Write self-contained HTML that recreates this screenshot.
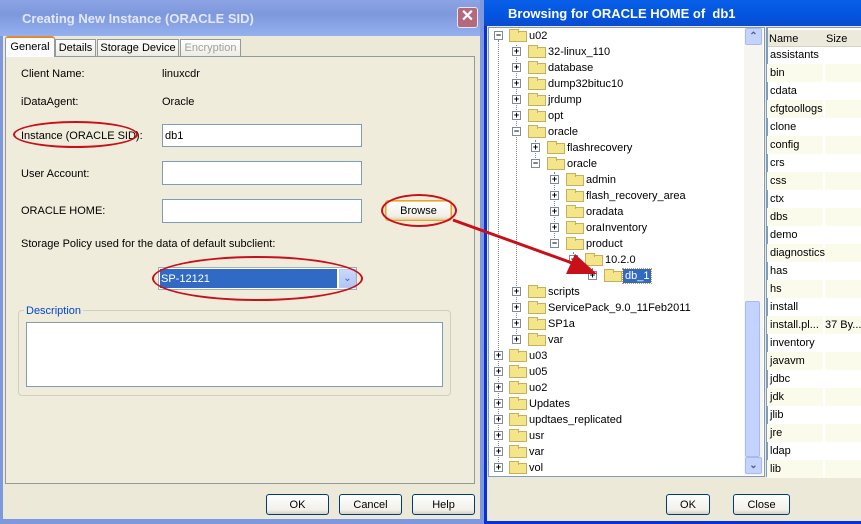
<!DOCTYPE html>
<html><head><meta charset="utf-8"><style>
*{margin:0;padding:0;box-sizing:border-box}
body{width:861px;height:524px;overflow:hidden;background:#ece9d8;font-family:"Liberation Sans",sans-serif;font-size:11px;color:#000;position:relative}
.a{position:absolute;white-space:nowrap}
.lbl{position:absolute;font-size:11px;white-space:nowrap;margin-top:1px}
.inp{position:absolute;background:#fff;border:1px solid #7f9db9}
.btn{position:absolute;border:1px solid #003c74;border-radius:3px;background:linear-gradient(#fff,#f0efe8 80%,#d6d0c5);text-align:center;font-size:11px;line-height:20px}
.tg{position:absolute;width:9px;height:9px;border:1px solid #7a8aa5;background:#fff;font-size:9px;line-height:7px;text-align:center;font-weight:bold;color:#000}
.fd{position:absolute;width:18px;height:11px;background:#f4e48a;border:1px solid #c7b156}
.fd:before{content:"";position:absolute;left:-1px;top:-3px;width:8px;height:3px;background:#f4e48a;border:1px solid #c7b156;border-bottom:none}
.tx{position:absolute;font-size:11px;white-space:nowrap;line-height:14px;margin-top:1px}
.row{position:absolute;left:767px;width:94px;height:18px;line-height:19px;padding-left:3px;font-size:11px;white-space:nowrap}
.alt{background:linear-gradient(90deg,#fbfbec 56px,#fff 56px,#fff 58px,#fbfbec 58px)}
.dv{position:absolute;border-left:1px dotted #888}
</style></head><body>

<div class="a" style="left:0;top:0;width:484px;height:36px;background:linear-gradient(#8ca4e4,#7e98dd 40%,#95b0ee);"></div>
<div class="lbl" style="left:22px;top:10px;font-size:13px;font-weight:bold;color:#e2e8f8">Creating New Instance (ORACLE SID)</div>
<div class="a" style="left:457px;top:7px;width:21px;height:21px;border:1px solid #e6e6f6;border-radius:3px;background:#b46a7c;color:#fff;font-size:16px;font-weight:bold;text-align:center;line-height:18px">✕</div>
<div class="a" style="left:480px;top:0;width:4px;height:524px;background:#7e98dd"></div>
<div class="a" style="left:0;top:36px;width:3px;height:488px;background:#7e98dd"></div>
<div class="a" style="left:0;top:519px;width:484px;height:5px;background:#7e98dd"></div>

<div class="a" style="left:5px;top:56px;width:470px;height:428px;border:1px solid #919b9c;background:#efecdb"></div>
<div class="a" style="left:5px;top:36px;width:50px;height:21px;border:1px solid #919b9c;border-bottom:none;border-top:2px solid #e68b2c;background:#fcfcfe;border-radius:3px 3px 0 0;text-align:center;line-height:18px">General</div>
<div class="a" style="left:55px;top:39px;width:41px;height:17px;border:1px solid #919b9c;border-bottom:none;background:linear-gradient(#fff,#ecebe6);text-align:center;line-height:16px">Details</div>
<div class="a" style="left:97px;top:39px;width:82px;height:17px;border:1px solid #919b9c;border-bottom:none;background:linear-gradient(#fff,#ecebe6);text-align:center;line-height:16px">Storage Device</div>
<div class="a" style="left:180px;top:39px;width:61px;height:17px;border:1px solid #919b9c;border-bottom:none;background:linear-gradient(#fff,#ecebe6);text-align:center;line-height:16px;color:#a0a0a0">Encryption</div>

<div class="lbl" style="left:21px;top:67px">Client Name:</div>
<div class="lbl" style="left:162px;top:67px">linuxcdr</div>
<div class="lbl" style="left:21px;top:95px">iDataAgent:</div>
<div class="lbl" style="left:162px;top:95px">Oracle</div>
<div class="lbl" style="left:21px;top:129px">Instance (ORACLE SID):</div>
<div class="a" style="left:13px;top:121px;width:125px;height:27px;border:2px solid #c8101a;border-radius:50%"></div>
<div class="inp" style="left:162px;top:124px;width:200px;height:23px"><span style="position:absolute;left:2px;top:5px">db1</span></div>
<div class="lbl" style="left:21px;top:167px">User Account:</div>
<div class="inp" style="left:162px;top:161px;width:200px;height:24px"></div>
<div class="lbl" style="left:21px;top:204px">ORACLE HOME:</div>
<div class="inp" style="left:162px;top:199px;width:200px;height:24px"></div>
<div class="btn" style="left:385px;top:200px;width:67px;height:21px;border-color:#e8a23c;box-shadow:inset 0 0 0 1px #f8c86a">Browse</div>
<div class="a" style="left:381px;top:194px;width:76px;height:33px;border:2px solid #c8101a;border-radius:50%"></div>
<div class="lbl" style="left:21px;top:237px">Storage Policy used for the data of default subclient:</div>
<div class="inp" style="left:158px;top:267px;width:199px;height:23px;border-color:#a5acb5"></div>
<div class="a" style="left:160px;top:269px;width:177px;height:19px;background:#316ac5;color:#fff;line-height:20px;padding-left:1px">SP-12121</div>
<div class="a" style="left:339px;top:269px;width:17px;height:19px;background:linear-gradient(#c9d8fc,#b0c6f7);border:1px solid #b9cbf3;color:#4d6185;font-size:10px;text-align:center;line-height:17px">⌄</div>
<div class="a" style="left:152px;top:256px;width:211px;height:45px;border:2px solid #c8101a;border-radius:50%"></div>
<div class="a" style="left:18px;top:310px;width:433px;height:86px;border:1px solid #d0d0bf;border-radius:4px"></div>
<div class="lbl" style="left:24px;top:304px;background:#efecdb;color:#0046d5;padding:0 2px">Description</div>
<div class="inp" style="left:26px;top:322px;width:417px;height:65px"></div>

<div class="btn" style="left:266px;top:494px;width:63px;height:21px">OK</div>
<div class="btn" style="left:339px;top:494px;width:63px;height:21px">Cancel</div>
<div class="btn" style="left:412px;top:494px;width:63px;height:21px">Help</div>

<div class="a" style="left:484px;top:0;width:377px;height:524px;background:#ece9d8;border-left:3px solid #0831d9;border-bottom:3px solid #0831d9"></div>
<div class="a" style="left:484px;top:0;width:377px;height:26px;background:linear-gradient(#0a5fe8,#0256e2 50%,#0a4cd0)"></div>
<div class="lbl" style="left:508px;top:5px;font-size:13px;font-weight:bold;color:#fff">Browsing for ORACLE HOME of &nbsp;db1</div>
<div class="a" style="left:488px;top:27px;width:277px;height:450px;background:#fff;border:1px solid #7f9db9"></div>
<div class="a" style="left:744px;top:28px;width:19px;height:447px;background:#f6f5ef"></div>
<div class="a" style="left:745px;top:28px;width:17px;height:17px;background:#c3d3fd;border:1px solid #a6bbef;border-radius:2px;color:#4d6185;font-size:10px;text-align:center;line-height:15px;font-weight:bold">⌃</div>
<div class="a" style="left:745px;top:301px;width:15px;height:156px;background:#c3d3fd;border:1px solid #a6bbef;border-radius:2px"></div>
<div class="a" style="left:745px;top:457px;width:17px;height:17px;background:#c3d3fd;border:1px solid #a6bbef;border-radius:2px;color:#4d6185;font-size:10px;text-align:center;line-height:15px;font-weight:bold">⌄</div>
<div class="a" style="left:766px;top:27px;width:95px;height:450px;background:#fff;border-left:2px solid #7f9db9;border-top:1px solid #7f9db9;border-bottom:1px solid #7f9db9"></div>
<div class="a" style="left:768px;top:30px;width:93px;height:17px;background:#ebeadb;border-bottom:1px solid #d6d2c2"></div>
<div class="lbl" style="left:769px;top:32px">Name</div>
<div class="lbl" style="left:826px;top:32px">Size</div>
<div class="row" style="top:46px">assistants</div>
<div class="row alt" style="top:64px">bin</div>
<div class="row" style="top:82px">cdata</div>
<div class="row alt" style="top:100px">cfgtoollogs</div>
<div class="row" style="top:118px">clone</div>
<div class="row alt" style="top:136px">config</div>
<div class="row" style="top:154px">crs</div>
<div class="row alt" style="top:172px">css</div>
<div class="row" style="top:190px">ctx</div>
<div class="row alt" style="top:208px">dbs</div>
<div class="row" style="top:226px">demo</div>
<div class="row alt" style="top:244px">diagnostics</div>
<div class="row" style="top:262px">has</div>
<div class="row alt" style="top:280px">hs</div>
<div class="row" style="top:298px">install</div>
<div class="row alt" style="top:316px">install.pl...<span style="position:absolute;left:58px">37 By...</span></div>
<div class="row" style="top:334px">inventory</div>
<div class="row alt" style="top:352px">javavm</div>
<div class="row" style="top:370px">jdbc</div>
<div class="row alt" style="top:388px">jdk</div>
<div class="row" style="top:406px">jlib</div>
<div class="row alt" style="top:424px">jre</div>
<div class="row" style="top:442px">ldap</div>
<div class="row alt" style="top:460px">lib</div>

<div class="dv" style="left:498px;top:40px;height:428px"></div>
<div class="dv" style="left:516px;top:45px;height:295px"></div>
<div class="dv" style="left:535px;top:140px;height:24px"></div>
<div class="dv" style="left:554px;top:172px;height:72px"></div>
<div class="dv" style="left:573px;top:252px;height:8px"></div>
<div class="dv" style="left:592px;top:268px;height:8px"></div>

<div class="tg" style="left:494px;top:31px">−</div><div class="fd" style="left:509px;top:31px"></div><div class="tx" style="left:529px;top:28px">u02</div>
<div class="tg" style="left:512px;top:47px">+</div><div class="fd" style="left:528px;top:47px"></div><div class="tx" style="left:548px;top:44px">32-linux_110</div>
<div class="tg" style="left:512px;top:63px">+</div><div class="fd" style="left:528px;top:63px"></div><div class="tx" style="left:548px;top:60px">database</div>
<div class="tg" style="left:512px;top:79px">+</div><div class="fd" style="left:528px;top:79px"></div><div class="tx" style="left:548px;top:76px">dump32bituc10</div>
<div class="tg" style="left:512px;top:95px">+</div><div class="fd" style="left:528px;top:95px"></div><div class="tx" style="left:548px;top:92px">jrdump</div>
<div class="tg" style="left:512px;top:111px">+</div><div class="fd" style="left:528px;top:111px"></div><div class="tx" style="left:548px;top:108px">opt</div>
<div class="tg" style="left:512px;top:127px">−</div><div class="fd" style="left:528px;top:127px"></div><div class="tx" style="left:548px;top:124px">oracle</div>
<div class="tg" style="left:531px;top:143px">+</div><div class="fd" style="left:547px;top:143px"></div><div class="tx" style="left:567px;top:140px">flashrecovery</div>
<div class="tg" style="left:531px;top:159px">−</div><div class="fd" style="left:547px;top:159px"></div><div class="tx" style="left:567px;top:156px">oracle</div>
<div class="tg" style="left:550px;top:175px">+</div><div class="fd" style="left:566px;top:175px"></div><div class="tx" style="left:586px;top:172px">admin</div>
<div class="tg" style="left:550px;top:191px">+</div><div class="fd" style="left:566px;top:191px"></div><div class="tx" style="left:586px;top:188px">flash_recovery_area</div>
<div class="tg" style="left:550px;top:207px">+</div><div class="fd" style="left:566px;top:207px"></div><div class="tx" style="left:586px;top:204px">oradata</div>
<div class="tg" style="left:550px;top:223px">+</div><div class="fd" style="left:566px;top:223px"></div><div class="tx" style="left:586px;top:220px">oraInventory</div>
<div class="tg" style="left:550px;top:239px">−</div><div class="fd" style="left:566px;top:239px"></div><div class="tx" style="left:586px;top:236px">product</div>
<div class="tg" style="left:569px;top:255px">−</div><div class="fd" style="left:585px;top:255px"></div><div class="tx" style="left:605px;top:252px">10.2.0</div>
<div class="tg" style="left:588px;top:271px">+</div><div class="fd" style="left:604px;top:271px"></div><div class="tx" style="left:623px;top:268px;background:#316ac5;color:#fff;padding:0 2px;outline:1px dotted #c8a030">db_1</div>
<div class="tg" style="left:512px;top:287px">+</div><div class="fd" style="left:528px;top:287px"></div><div class="tx" style="left:548px;top:284px">scripts</div>
<div class="tg" style="left:512px;top:303px">+</div><div class="fd" style="left:528px;top:303px"></div><div class="tx" style="left:548px;top:300px">ServicePack_9.0_11Feb2011</div>
<div class="tg" style="left:512px;top:319px">+</div><div class="fd" style="left:528px;top:319px"></div><div class="tx" style="left:548px;top:316px">SP1a</div>
<div class="tg" style="left:512px;top:335px">+</div><div class="fd" style="left:528px;top:335px"></div><div class="tx" style="left:548px;top:332px">var</div>
<div class="tg" style="left:494px;top:351px">+</div><div class="fd" style="left:509px;top:351px"></div><div class="tx" style="left:529px;top:348px">u03</div>
<div class="tg" style="left:494px;top:367px">+</div><div class="fd" style="left:509px;top:367px"></div><div class="tx" style="left:529px;top:364px">u05</div>
<div class="tg" style="left:494px;top:383px">+</div><div class="fd" style="left:509px;top:383px"></div><div class="tx" style="left:529px;top:380px">uo2</div>
<div class="tg" style="left:494px;top:399px">+</div><div class="fd" style="left:509px;top:399px"></div><div class="tx" style="left:529px;top:396px">Updates</div>
<div class="tg" style="left:494px;top:415px">+</div><div class="fd" style="left:509px;top:415px"></div><div class="tx" style="left:529px;top:412px">updtaes_replicated</div>
<div class="tg" style="left:494px;top:431px">+</div><div class="fd" style="left:509px;top:431px"></div><div class="tx" style="left:529px;top:428px">usr</div>
<div class="tg" style="left:494px;top:447px">+</div><div class="fd" style="left:509px;top:447px"></div><div class="tx" style="left:529px;top:444px">var</div>
<div class="tg" style="left:494px;top:463px">+</div><div class="fd" style="left:509px;top:463px"></div><div class="tx" style="left:529px;top:460px">vol</div>

<div class="btn" style="left:666px;top:494px;width:44px;height:21px">OK</div>
<div class="btn" style="left:733px;top:494px;width:57px;height:21px">Close</div>

<svg class="a" style="left:0;top:0" width="861" height="524"><line x1="453" y1="220" x2="575" y2="264" stroke="#c8101a" stroke-width="3"/><polygon points="597,274 566,274 575,254" fill="#c8101a"/></svg>
</body></html>
